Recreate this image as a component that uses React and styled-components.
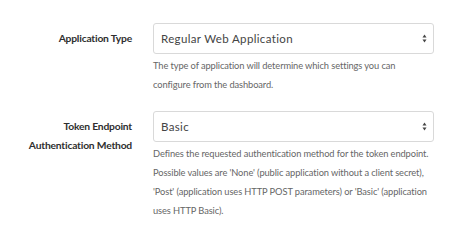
import React from "react";
import styled, { createGlobalStyle } from "styled-components";

const Global = createGlobalStyle`
  html, body { margin: 0; padding: 0; background: #fff; }
  body { font-family: Lato, "Noto Sans", sans-serif; -webkit-font-smoothing: antialiased; }
`;

const Form = styled.div`
  padding-top: 23px;
  display: flex;
  flex-direction: column;
  gap: 17px;
`;

const Row = styled.div`
  display: grid;
  grid-template-columns: 132px 281px;
  column-gap: 21px;
  align-items: start;
`;

const Label = styled.label`
  text-align: right;
  font-size: 10.3px;
  letter-spacing: -0.2px;
  font-weight: 700;
  color: #2f2f2f;
  line-height: 19px;
  padding-top: 6px;
`;

const Field = styled.div`
  display: flex;
  flex-direction: column;
`;

const Select = styled.div`
  height: 31px;
  box-sizing: border-box;
  border: 1px solid #d9d9d9;
  border-radius: 3px;
  display: flex;
  align-items: center;
  justify-content: space-between;
  padding: 0 6px 0 7px;
  font-size: 11.5px;
  letter-spacing: 0.35px;
  color: #444;
`;

const Help = styled.p`
  margin: 2px 0 0;
  font-size: 9.3px;
  letter-spacing: -0.1px;
  line-height: 19px;
  color: #666;
`;

const Arrows = () => (
  <svg width="5" height="9" viewBox="0 0 5 9">
    <path d="M2.5 0.5 L4.5 3.5 H0.5 Z" fill="#444" />
    <path d="M2.5 8.5 L4.5 5.5 H0.5 Z" fill="#444" />
  </svg>
);

export default function App() {
  return (
    <>
      <Global />
      <Form>
        <Row>
          <Label>Application Type</Label>
          <Field>
            <Select>
              <span>Regular Web Application</span>
              <Arrows />
            </Select>
            <Help>
              The type of application will determine which settings you can configure from the dashboard.
            </Help>
          </Field>
        </Row>
        <Row>
          <Label>
            Token Endpoint
            <br />
            Authentication Method
          </Label>
          <Field>
            <Select>
              <span>Basic</span>
              <Arrows />
            </Select>
            <Help>
              Defines the requested authentication method for the token endpoint. Possible values are 'None' (public application without a client secret), 'Post' (application uses HTTP POST parameters) or 'Basic' (application uses HTTP Basic).
            </Help>
          </Field>
        </Row>
      </Form>
    </>
  );
}
